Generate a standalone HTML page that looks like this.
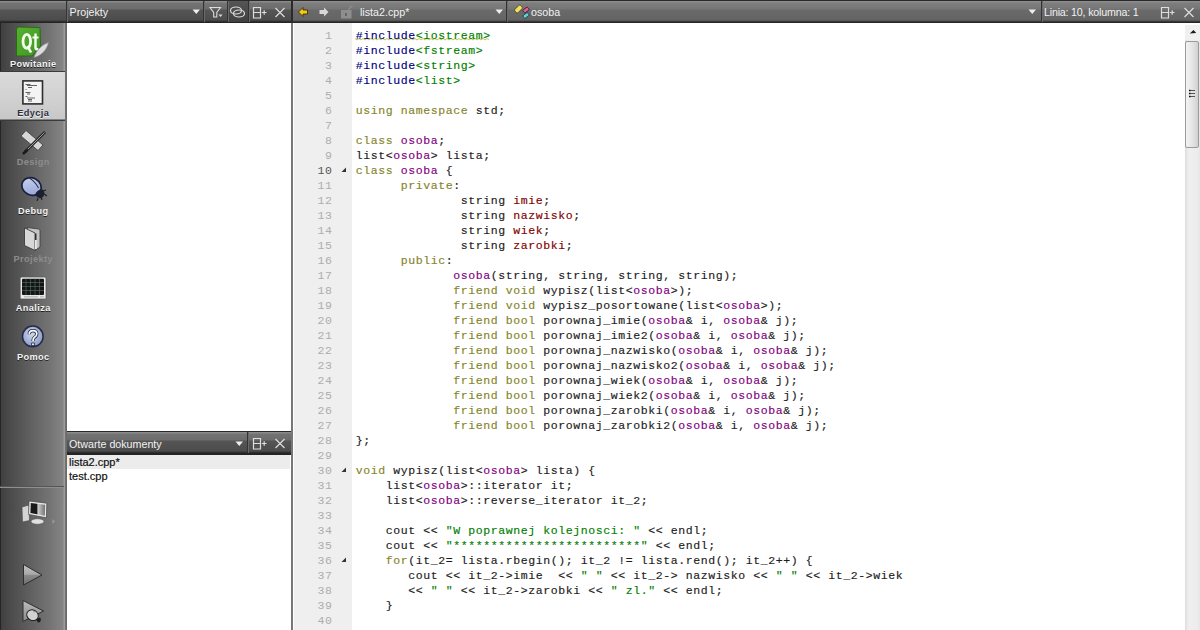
<!DOCTYPE html>
<html><head><meta charset="utf-8">
<style>
*{margin:0;padding:0;box-sizing:border-box}
html,body{width:1200px;height:630px;overflow:hidden;background:#fff;font-family:"Liberation Sans",sans-serif}
.abs{position:absolute}
#modebar{left:0;top:23px;width:67px;height:607px;background:linear-gradient(to right,#252525 0,#252525 1px,#404040 1px,#464646 6px,#555 20px,#656565 35px,#747474 50px,#848484 63px,#9c9c9c 64px,#9c9c9c 65px,#767676 65px,#666 67px)}
.tb{background:linear-gradient(#2a2a2a 0,#2a2a2a 1px,#8a8a8a 1px,#8a8a8a 2px,#737373 3px,#6c6c6c 9px,#555 10px,#4c4c4c 20px,#3a3a3a 21px,#242424 22px,#242424 23px)}
.tbe{background:linear-gradient(#2a2a2a 0,#2a2a2a 1px,#8e8e8e 1px,#8a8a8a 2px,#7e7e7e 3px,#767676 9px,#6a6a6a 10px,#646464 20px,#4a4a4a 21px,#262626 22px,#262626 23px)}
#topbar{left:0;top:0;width:1200px;height:23px}
#panel{left:67px;top:23px;width:224px;height:607px;background:#fff}
#sep{left:291px;top:23px;width:2px;height:607px;background:#777}
#gutter{left:294px;top:23px;width:58px;height:607px;background:#efefef}
#code{left:355.7px;top:28px;font-family:"Liberation Mono",monospace;font-size:11.5px;letter-spacing:0.6px;-webkit-text-stroke:0.15px currentColor;line-height:15px;white-space:pre;color:#1c1c1c}
#nums{left:293px;top:28px;width:39.6px;text-align:right;font-family:"Liberation Mono",monospace;font-size:11.5px;letter-spacing:0.6px;line-height:15px;white-space:pre;color:#adadad}
.k{color:#84842a}.t{color:#800080}.s{color:#008000}.p{color:#000080}.f{color:#800000}
.ttl{color:#f2f2f2;font-size:10.7px;top:5px;line-height:14px}
.vs{width:2px;height:21px;top:1px;background:linear-gradient(to right,#333 0,#333 1px,#6a6a6a 1px)}
.ml{left:0;width:66px;text-align:center;font-weight:bold;font-size:9.2px;letter-spacing:0.4px;text-indent:0.4px;line-height:11px;color:#f4f4f4;text-shadow:0 1px 0 #222}
.ml.dis{color:#8c8c8c;text-shadow:none}
#scroll{left:1185px;top:23px;width:15px;height:607px;background:linear-gradient(to right,#dcdcdc 0,#e8e8e8 2px,#efefef 4px,#ececec 13px,#e4e4e4 15px)}
</style></head><body>
<!-- top toolbar -->
<div id="topbar" class="abs tb"></div>
<div class="abs tbe" style="left:293px;top:0;width:907px;height:23px"></div>
<div id="modebar" class="abs"></div>
<!-- Edycja selected -->
<div class="abs" style="left:0;top:71px;width:65px;height:50px;background:linear-gradient(#3a3a3a 0,#3a3a3a 1px,#dadada 1px,#d2d2d2 25px,#c8c8c8 48px,#3a3a3a 49px)"></div>
<div class="abs" style="left:0;top:487px;width:64px;height:1px;background:#8e8e8e"></div>
<div class="abs" style="left:0;top:486px;width:64px;height:1px;background:#555"></div>

<!-- mode labels -->
<div class="abs ml" style="top:59px">Powitanie</div>
<div class="abs ml" style="top:108px;color:#2a3040;text-shadow:0 1px 0 #eee">Edycja</div>
<div class="abs ml dis" style="top:157px">Design</div>
<div class="abs ml" style="top:206px">Debug</div>
<div class="abs ml dis" style="top:254px">Projekty</div>
<div class="abs ml" style="top:303px">Analiza</div>
<div class="abs ml" style="top:352px">Pomoc</div>

<!-- Qt logo -->
<svg class="abs" style="left:10px;top:22px" width="45" height="38" viewBox="0 0 45 38">
  <defs><linearGradient id="qg" x1="0" y1="0" x2="1" y2="1"><stop offset="0" stop-color="#58b030"/><stop offset="1" stop-color="#3e9622"/></linearGradient></defs>
  <path d="M9 5 L30 5.5 L30.5 24 L22 34 L6.5 34 L6.5 8 Q6.5 5 9 5 Z" fill="url(#qg)" stroke="#2a6a18" stroke-width="1"/>
  <ellipse cx="16.8" cy="19.3" rx="3.8" ry="7" fill="none" stroke="#f4fff0" stroke-width="2.8"/>
  <path d="M17.5 24 L21 30.5" stroke="#f4fff0" stroke-width="2.6"/>
  <path d="M25.5 11.5 L25.5 25.5 Q25.5 27.5 28.5 27.5" fill="none" stroke="#f4fff0" stroke-width="2.4"/>
  <path d="M22.5 15.5 L28.5 15.5" stroke="#f4fff0" stroke-width="2"/>
  <path d="M24 35.5 C26 29 31 23 38.5 20.5 C37 28 31 34 24 35.5 Z" fill="#dcdcdc" stroke="#8a8a8a" stroke-width=".7"/>
</svg>
<!-- Edycja doc icon -->
<svg class="abs" style="left:22px;top:80px" width="22" height="25" viewBox="0 0 22 25">
  <rect x="0.9" y="0.9" width="19.6" height="23" fill="#f4f4f4" stroke="#2e2e2e" stroke-width="1.6"/>
  <path d="M3.5 4.5h5M5 5.5h10M6 7.5h4M3.5 9.5h1M3.5 12.5h5M5 14h3M3.5 16.5h2M5 18h8M6 19.5h4M6 21h4" stroke="#555" stroke-width=".9"/>
</svg>
<!-- Design icon -->
<svg class="abs" style="left:14px;top:124px" width="38" height="32" viewBox="0 0 38 32">
  <path d="M12 6.5 L29 21 L24 26.5 L7 12 Z" fill="#d6d6d6" stroke="#3a3a3a" stroke-width=".8"/>
  <path d="M31 8 L11 28" stroke="#2a2a2a" stroke-width="3"/>
  <path d="M30.5 8.5 L14 25" stroke="#9a9a9a" stroke-width="1"/>
  <path d="M13 26 L9 30" stroke="#1a1a1a" stroke-width="2.5"/>
</svg>
<!-- Debug bug -->
<svg class="abs" style="left:14px;top:172px" width="38" height="32" viewBox="0 0 38 32">
  <defs><linearGradient id="bg1" x1="0" y1="0" x2="1" y2="1"><stop offset="0" stop-color="#d0d8f2"/><stop offset="1" stop-color="#8e9ed4"/></linearGradient></defs>
  <ellipse cx="17.5" cy="14.5" rx="10" ry="8.6" transform="rotate(28 17.5 14.5)" fill="url(#bg1)" stroke="#18203a" stroke-width="1.7"/>
  <path d="M14.5 5.5 Q21 9 24.5 16" fill="none" stroke="#2a3658" stroke-width="1.1"/>
  <path d="M21 23 Q23 17 28.5 17.5 Q32 20 29 25 Q25 28 21 23 Z" fill="#1c2030"/>
  <path d="M29 19 L32 18 M30 22 L33 24 M24 26 L23 29 M27 25 L28 28" stroke="#1c2030" stroke-width="1.2"/>
</svg>
<!-- Projekty folder icon -->
<svg class="abs" style="left:14px;top:222px" width="38" height="32" viewBox="0 0 38 32">
  <path d="M13 5.5 L24.5 7 L26 8 L26 25 L21 28.5 Z" fill="#c4c4c4" stroke="#3a3a3a" stroke-width=".8"/>
  <path d="M10.5 5.8 L21 11 L21 28.5 L10.5 23.5 Z" fill="#d8d8d8" stroke="#3a3a3a" stroke-width=".9"/>
  <path d="M21.8 11.5 L21.8 18" stroke="#222" stroke-width="1.3"/>
  <path d="M21.8 18 L21.8 27" stroke="#fafafa" stroke-width="1.3"/>
</svg>
<!-- Analiza monitor -->
<svg class="abs" style="left:14px;top:270px" width="38" height="32" viewBox="0 0 38 32">
  <rect x="6.2" y="7" width="25.8" height="22" rx="1.5" fill="#e8e8e8" stroke="#555" stroke-width=".7"/>
  <rect x="8" y="8.8" width="22" height="16.2" rx="1" fill="#121614"/>
  <path d="M8 12.5h22M8 16.5h22M8 20.5h22M12 8.8v16.2M16.5 8.8v16.2M21 8.8v16.2M25.5 8.8v16.2" stroke="#6a7a76" stroke-width=".5"/>
  <path d="M10 26.8h14M26 26.8h4" stroke="#9a9a9a" stroke-width=".8"/>
</svg>
<!-- Pomoc help -->
<svg class="abs" style="left:14px;top:320px" width="38" height="32" viewBox="0 0 38 32">
  <defs><radialGradient id="hg" cx=".45" cy=".4" r=".65"><stop offset="0" stop-color="#d2daf0"/><stop offset="1" stop-color="#8494c4"/></radialGradient></defs>
  <circle cx="18.8" cy="16.4" r="10.3" fill="url(#hg)" stroke="#252c48" stroke-width="1.5"/>
  <g transform="translate(0,1.3)"><path d="M15.2 13 Q15.2 9.3 19 9.3 Q22.8 9.3 22.8 12.6 Q22.8 14.8 20.3 16.2 Q19 17 19 19.6" fill="none" stroke="#1e2540" stroke-width="3.2"/>
  <path d="M15.2 13 Q15.2 9.3 19 9.3 Q22.8 9.3 22.8 12.6 Q22.8 14.8 20.3 16.2 Q19 17 19 19.6" fill="none" stroke="#fff" stroke-width="1.7"/>
  <rect x="17.3" y="21.3" width="3.4" height="3.4" fill="#1e2540"/>
  <rect x="18.1" y="22.1" width="1.8" height="1.8" fill="#fff"/></g>
</svg>
<!-- bottom icons -->
<svg class="abs" style="left:18px;top:498px" width="40" height="30" viewBox="0 0 40 30">
  <defs><linearGradient id="scr" x1="0" y1="0" x2="1" y2="0"><stop offset="0" stop-color="#1a1a1a"/><stop offset=".45" stop-color="#1a1a1a"/><stop offset=".5" stop-color="#d0d0d0"/><stop offset="1" stop-color="#707070"/></linearGradient></defs>
  <path d="M4 9 L11 7 L11.5 22.5 L4.5 24 Z" fill="#d4d4d4" stroke="#444" stroke-width=".6"/>
  <ellipse cx="19.5" cy="23.5" rx="6.5" ry="2.8" fill="#e0e0e0" stroke="#555" stroke-width=".6"/>
  <path d="M11 3 L28.8 5.2 L28.4 19.8 L10.6 16.4 Z" fill="#eaeaea" stroke="#444" stroke-width=".7"/>
  <path d="M12.8 5 L27.2 6.8 L26.8 17.8 L12.4 15 Z" fill="url(#scr)"/>
  <path d="M34.5 21 L37 23.5 L34.5 26 Z" fill="#9a9a9a"/>
</svg>
<svg class="abs" style="left:21px;top:563px" width="26" height="24" viewBox="0 0 26 24">
  <defs><linearGradient id="pg" x1="0" y1="0" x2="0" y2="1"><stop offset="0" stop-color="#c4c4c4"/><stop offset=".48" stop-color="#a8a8a8"/><stop offset=".52" stop-color="#8a8a8a"/><stop offset="1" stop-color="#707070"/></linearGradient></defs>
  <path d="M2.5 1.5 L21 12 L2.5 22 Z" fill="url(#pg)" stroke="#2e2e2e" stroke-width="1"/>
</svg>
<svg class="abs" style="left:21px;top:599px" width="26" height="28" viewBox="0 0 26 28">
  <defs><linearGradient id="pg2" x1="0" y1="0" x2="0" y2="1"><stop offset="0" stop-color="#bdbdbd"/><stop offset="1" stop-color="#8a8a8a"/></linearGradient></defs>
  <path d="M2 1.5 L22.5 12 L2 22.5 Z" fill="url(#pg2)" stroke="#2e2e2e" stroke-width="1"/>
  <ellipse cx="11.5" cy="16.2" rx="6" ry="5.2" transform="rotate(30 11.5 16.2)" fill="#d2d2d2" stroke="#222" stroke-width="1"/>
  <path d="M12 13 Q15 11.5 17 14" fill="none" stroke="#888" stroke-width=".7"/>
  <path d="M15.5 20.5 Q17 18 19.5 19 Q20.5 22 18 23.5 Q16 23.5 15.5 20.5 Z" fill="#1e1e1e"/>
</svg>

<!-- projects panel -->
<div id="panel" class="abs"></div>
<div class="abs vs" style="left:66px"></div>
<div class="abs ttl" style="left:69.5px">Projekty</div>
<div class="abs vs" style="left:203px"></div>
<div class="abs vs" style="left:227px"></div>
<div class="abs" style="left:229px;top:1px;width:19px;height:21px;background:linear-gradient(#555,#404040)"></div>
<div class="abs vs" style="left:248px"></div>
<!-- dropdown arrows -->
<svg class="abs" style="left:192px;top:9px" width="9" height="6"><path d="M0.5 0.5 L8 0.5 L4.25 5 Z" fill="#eee"/></svg>
<!-- filter icon -->
<svg class="abs" style="left:208px;top:5px" width="16" height="14" viewBox="0 0 16 14">
  <path d="M2 2.5 L12.5 2.5 L8.8 7.5 L8.8 12 L5.7 12 L5.7 7.5 Z" fill="none" stroke="#ddd" stroke-width="1.1"/>
  <path d="M10.5 9.5 L14.5 9.5 L12.5 12 Z" fill="#ddd"/>
</svg>
<!-- link icon -->
<svg class="abs" style="left:229px;top:5px" width="17" height="14" viewBox="0 0 17 14">
  <ellipse cx="7" cy="5.5" rx="5.5" ry="3.5" fill="none" stroke="#ddd" stroke-width="1.2"/>
  <ellipse cx="10" cy="8.5" rx="5.5" ry="3.5" fill="none" stroke="#ddd" stroke-width="1.2"/>
</svg>
<!-- split icons -->
<svg class="abs" style="left:252px;top:5px" width="16" height="14" viewBox="0 0 16 14">
  <path d="M1.5 2.5 H8.5 V13 H1.5 Z M1.5 7.5 H8.5 M9.8 7.5 H14.5 M12.2 5.2 V9.8" fill="none" stroke="#ddd" stroke-width="1.2"/>
</svg>
<svg class="abs" style="left:274px;top:6px" width="12" height="12" viewBox="0 0 12 12">
  <path d="M1.5 2 L10.5 11 M10.5 2 L1.5 11" stroke="#ddd" stroke-width="1.2"/>
</svg>

<!-- open documents -->
<div class="abs tb" style="left:67px;top:431px;width:224px;height:24px"></div>
<div class="abs ttl" style="left:69px;top:437px">Otwarte dokumenty</div>
<svg class="abs" style="left:235px;top:441px" width="9" height="6"><path d="M0.5 0.5 L8 0.5 L4.25 5 Z" fill="#eee"/></svg>
<div class="abs vs" style="left:247px;top:432px"></div>
<svg class="abs" style="left:252px;top:436px" width="16" height="14" viewBox="0 0 16 14">
  <path d="M1.5 2.5 H8.5 V13 H1.5 Z M1.5 7.5 H8.5 M9.8 7.5 H14.5 M12.2 5.2 V9.8" fill="none" stroke="#ddd" stroke-width="1.2"/>
</svg>
<svg class="abs" style="left:274px;top:437px" width="12" height="12" viewBox="0 0 12 12">
  <path d="M1.5 2 L10.5 11 M10.5 2 L1.5 11" stroke="#ddd" stroke-width="1.2"/>
</svg>
<div class="abs" style="left:67px;top:455px;width:223px;height:14px;background:#ececec"></div>
<div class="abs" style="left:69px;top:455px;font-size:11px;line-height:14px;color:#111;-webkit-text-stroke:0.2px #111">lista2.cpp*</div>
<div class="abs" style="left:69px;top:469px;font-size:11px;line-height:14px;color:#111;-webkit-text-stroke:0.2px #111">test.cpp</div>

<div id="sep" class="abs"></div>
<div class="abs" style="left:291px;top:0;width:2px;height:23px;background:#2a2a2a"></div>

<!-- editor toolbar -->
<svg class="abs" style="left:297px;top:6px" width="13" height="12" viewBox="0 0 13 12">
  <path d="M1.5 6 L6 1.5 L6 4 L10.5 4 L10.5 8 L6 8 L6 10.5 Z" fill="#f2cc10" stroke="#3a3010" stroke-width=".9"/>
</svg>
<svg class="abs" style="left:318px;top:6px" width="12" height="12" viewBox="0 0 12 12">
  <path d="M10.5 6 L6 1.5 L6 4 L1.5 4 L1.5 8 L6 8 L6 10.5 Z" fill="#d8d8d8"/>
</svg>
<svg class="abs" style="left:340px;top:5px" width="14" height="14" viewBox="0 0 14 14">
  <rect x="1" y="5" width="10.5" height="8.5" fill="#8e8e8e"/><rect x="5" y="8" width="2" height="3" fill="#666"/>
  <path d="M9 5 L9 4 Q10 1.5 12.5 1" stroke="#8e8e8e" stroke-width="1.3" fill="none"/>
</svg>
<div class="abs ttl" style="left:360px">lista2.cpp*</div>
<svg class="abs" style="left:495px;top:9px" width="9" height="6"><path d="M0.5 0.5 L8 0.5 L4.25 5 Z" fill="#eee"/></svg>
<div class="abs vs" style="left:506px"></div>
<svg class="abs" style="left:512px;top:3px" width="20" height="18" viewBox="0 0 20 18">
  <rect x="1.5" y="-2.3" width="8" height="4.6" rx="1.3" transform="translate(6.5,6) rotate(-45) translate(-5.5,0)" fill="#ece060" stroke="#4a4418" stroke-width=".8"/>
  <rect x="0" y="-1.8" width="6" height="3.6" rx="1.3" transform="translate(14,7) rotate(-35) translate(-3,0)" fill="#e06090" stroke="#3a1828" stroke-width=".8"/>
  <rect x="0" y="-1.8" width="6" height="3.6" rx="1.3" transform="translate(14,12.5) rotate(-35) translate(-3,0)" fill="#60d0d0" stroke="#183a3a" stroke-width=".8"/>
</svg>
<div class="abs ttl" style="left:531px">osoba</div>
<svg class="abs" style="left:1028px;top:9px" width="9" height="6"><path d="M0.5 0.5 L8 0.5 L4.25 5 Z" fill="#eee"/></svg>
<div class="abs vs" style="left:1041px"></div>
<div class="abs ttl" style="left:1044px;letter-spacing:-0.2px">Linia: 10, kolumna: 1</div>
<svg class="abs" style="left:1160px;top:5px" width="16" height="14" viewBox="0 0 16 14">
  <path d="M1.5 2.5 H8.5 V13 H1.5 Z M1.5 7.5 H8.5 M9.8 7.5 H14.5 M12.2 5.2 V9.8" fill="none" stroke="#ddd" stroke-width="1.2"/>
</svg>
<svg class="abs" style="left:1183px;top:6px" width="12" height="12" viewBox="0 0 12 12">
  <path d="M1.5 2 L10.5 11 M10.5 2 L1.5 11" stroke="#ddd" stroke-width="1.2"/>
</svg>

<div id="gutter" class="abs"></div>
<div id="scroll" class="abs"></div>
<div class="abs" style="left:1185px;top:23px;width:15px;height:2px;background:#fff"></div><div class="abs" style="left:1185px;top:25px;width:15px;height:15px;background:#f0f0f0"></div>
<svg class="abs" style="left:1188px;top:28px" width="9" height="7"><path d="M1.8 5.5 L5.5 2 L8.2 5 Z" fill="#1a1a1a"/></svg>
<div class="abs" style="left:1185px;top:41px;width:14px;height:107px;border:1px solid #9a9a9a;border-radius:2px;background:linear-gradient(to right,#f4f4f4,#e2e2e2 60%,#d0d0d0)"></div>
<svg class="abs" style="left:1188px;top:89px" width="9" height="10"><path d="M1 1.5h6M1 4.5h6M1 7.5h6" stroke="#555" stroke-width="1"/><path d="M1 1.5h1.5M1 4.5h1.5M1 7.5h1.5" stroke="#111" stroke-width="1.4"/></svg>

<!-- fold markers -->
<svg class="abs" style="left:341px;top:167px" width="6" height="6"><path d="M5 0.5 L5 5 L0.5 5 Z" fill="#333"/></svg>
<svg class="abs" style="left:341px;top:467px" width="6" height="6"><path d="M5 0.5 L5 5 L0.5 5 Z" fill="#333"/></svg>
<svg class="abs" style="left:341px;top:557px" width="6" height="6"><path d="M5 0.5 L5 5 L0.5 5 Z" fill="#333"/></svg>

<svg class="abs" style="left:355px;top:38px" width="136" height="3"><polyline points="0,0.5 2,2 4,0.5 6,2 8,0.5 10,2 12,0.5 14,2 16,0.5 18,2 20,0.5 22,2 24,0.5 26,2 28,0.5 30,2 32,0.5 34,2 36,0.5 38,2 40,0.5 42,2 44,0.5 46,2 48,0.5 50,2 52,0.5 54,2 56,0.5 58,2 60,0.5 62,2 64,0.5 66,2 68,0.5 70,2 72,0.5 74,2 76,0.5 78,2 80,0.5 82,2 84,0.5 86,2 88,0.5 90,2 92,0.5 94,2 96,0.5 98,2 100,0.5 102,2 104,0.5 106,2 108,0.5 110,2 112,0.5 114,2 116,0.5 118,2 120,0.5 122,2 124,0.5 126,2 128,0.5 130,2 132,0.5 134,2" fill="none" stroke="#b8c040" stroke-width=".9"/></svg>
<div id="nums" class="abs">1
2
3
4
5
6
7
8
9
<span style="color:#555">10</span>
11
12
13
14
15
16
17
18
19
20
21
22
23
24
25
26
27
28
29
30
31
32
33
34
35
36
37
38
39
40</div>
<div id="code" class="abs"><span class="p">#include</span><span class="s">&lt;iostream&gt;</span>
<span class="p">#include</span><span class="s">&lt;fstream&gt;</span>
<span class="p">#include</span><span class="s">&lt;string&gt;</span>
<span class="p">#include</span><span class="s">&lt;list&gt;</span>

<span class="k">using</span> <span class="k">namespace</span> std;

<span class="k">class</span> <span class="t">osoba</span>;
list&lt;<span class="t">osoba</span>&gt; lista;
<span class="k">class</span> <span class="t">osoba</span> {
      <span class="k">private</span>:
              string <span class="f">imie</span>;
              string <span class="f">nazwisko</span>;
              string <span class="f">wiek</span>;
              string <span class="f">zarobki</span>;
      <span class="k">public</span>:
             <span class="t">osoba</span>(string, string, string, string);
             <span class="k">friend</span> <span class="k">void</span> wypisz(list&lt;<span class="t">osoba</span>&gt;);
             <span class="k">friend</span> <span class="k">void</span> wypisz_posortowane(list&lt;<span class="t">osoba</span>&gt;);
             <span class="k">friend</span> <span class="k">bool</span> porownaj_imie(<span class="t">osoba</span>&amp; i, <span class="t">osoba</span>&amp; j);
             <span class="k">friend</span> <span class="k">bool</span> porownaj_imie2(<span class="t">osoba</span>&amp; i, <span class="t">osoba</span>&amp; j);
             <span class="k">friend</span> <span class="k">bool</span> porownaj_nazwisko(<span class="t">osoba</span>&amp; i, <span class="t">osoba</span>&amp; j);
             <span class="k">friend</span> <span class="k">bool</span> porownaj_nazwisko2(<span class="t">osoba</span>&amp; i, <span class="t">osoba</span>&amp; j);
             <span class="k">friend</span> <span class="k">bool</span> porownaj_wiek(<span class="t">osoba</span>&amp; i, <span class="t">osoba</span>&amp; j);
             <span class="k">friend</span> <span class="k">bool</span> porownaj_wiek2(<span class="t">osoba</span>&amp; i, <span class="t">osoba</span>&amp; j);
             <span class="k">friend</span> <span class="k">bool</span> porownaj_zarobki(<span class="t">osoba</span>&amp; i, <span class="t">osoba</span>&amp; j);
             <span class="k">friend</span> <span class="k">bool</span> porownaj_zarobki2(<span class="t">osoba</span>&amp; i, <span class="t">osoba</span>&amp; j);
};

<span class="k">void</span> wypisz(list&lt;<span class="t">osoba</span>&gt; lista) {
    list&lt;<span class="t">osoba</span>&gt;::iterator it;
    list&lt;<span class="t">osoba</span>&gt;::reverse_iterator it_2;

    cout &lt;&lt; <span class="s">"W poprawnej kolejnosci: "</span> &lt;&lt; endl;
    cout &lt;&lt; <span class="s">"*************************"</span> &lt;&lt; endl;
    <span class="k">for</span>(it_2= lista.rbegin(); it_2 != lista.rend(); it_2++) {
       cout &lt;&lt; it_2-&gt;imie  &lt;&lt; <span class="s">" "</span> &lt;&lt; it_2-&gt; nazwisko &lt;&lt; <span class="s">" "</span> &lt;&lt; it_2-&gt;wiek
       &lt;&lt; <span class="s">" "</span> &lt;&lt; it_2-&gt;zarobki &lt;&lt; <span class="s">" zl."</span> &lt;&lt; endl;
    }
</div>
</body></html>
